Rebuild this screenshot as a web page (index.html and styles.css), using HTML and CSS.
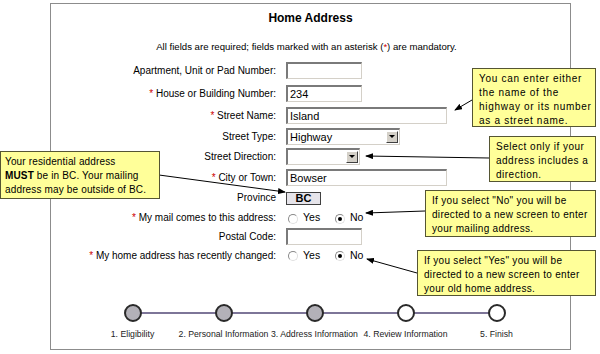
FILE: index.html
```html
<!DOCTYPE html>
<html>
<head>
<meta charset="utf-8">
<link rel="stylesheet" href="styles.css">
</head>
<body>
<div class="page">
  <div class="panel">
    <h1 class="title">Home Address</h1>
    <p class="intro">All fields are required; fields marked with an asterisk (<span class="req">*</span>) are mandatory.</p>
    <div class="form">
      <div class="lbl">Apartment, Unit or Pad Number:</div>
      <div class="ctl"><span class="input w76"></span></div>

      <div class="lbl"><span class="req">*</span> House or Building Number:</div>
      <div class="ctl"><span class="input w76">234</span></div>

      <div class="lbl"><span class="req">*</span> Street Name:</div>
      <div class="ctl"><span class="input w161">Island</span></div>

      <div class="lbl">Street Type:</div>
      <div class="ctl"><span class="select w114"><span class="sel-text">Highway</span><span class="sel-btn"></span></span></div>

      <div class="lbl">Street Direction:</div>
      <div class="ctl"><span class="select w74"><span class="sel-text"></span><span class="sel-btn"></span></span></div>

      <div class="lbl"><span class="req">*</span> City or Town:</div>
      <div class="ctl"><span class="input w161">Bowser</span></div>

      <div class="lbl">Province</div>
      <div class="ctl"><span class="prov">BC</span></div>

      <div class="lbl"><span class="req">*</span> My mail comes to this address:</div>
      <div class="ctl radios"><span class="radio"></span><span class="rlabel">Yes</span><span class="radio on"></span><span class="rlabel">No</span></div>

      <div class="lbl">Postal Code:</div>
      <div class="ctl"><span class="input w76"></span></div>

      <div class="lbl"><span class="req">*</span> My home address has recently changed:</div>
      <div class="ctl radios"><span class="radio"></span><span class="rlabel">Yes</span><span class="radio on"></span><span class="rlabel">No</span></div>
    </div>

    <div class="steps">
      <div class="track"></div>
      <div class="step done"><span class="dot"></span><span class="slabel">1. Eligibility</span></div>
      <div class="step done"><span class="dot"></span><span class="slabel">2. Personal Information</span></div>
      <div class="step done"><span class="dot"></span><span class="slabel">3. Address Information</span></div>
      <div class="step"><span class="dot"></span><span class="slabel">4. Review Information</span></div>
      <div class="step"><span class="dot"></span><span class="slabel">5. Finish</span></div>
    </div>
  </div>

  <svg class="arrows" width="600" height="354" viewBox="0 0 600 354">
    <defs>
      <marker id="ah" markerWidth="8" markerHeight="6" refX="7" refY="3" orient="auto" markerUnits="userSpaceOnUse">
        <path d="M0,0 L8,3 L0,6 Z" fill="#000"/>
      </marker>
    </defs>
    <line x1="472" y1="100" x2="455" y2="110" stroke="#000" stroke-width="1" marker-end="url(#ah)"/>
    <line x1="489" y1="158" x2="366" y2="156" stroke="#000" stroke-width="1" marker-end="url(#ah)"/>
    <line x1="159" y1="175" x2="285" y2="192" stroke="#000" stroke-width="1" marker-end="url(#ah)"/>
    <line x1="425" y1="211" x2="366" y2="213" stroke="#000" stroke-width="1" marker-end="url(#ah)"/>
    <line x1="417" y1="273" x2="367" y2="259" stroke="#000" stroke-width="1" marker-end="url(#ah)"/>
  </svg>

  <div class="note n1">You can enter either<br>the name of the<br>highway or its number<br>as a street name.</div>
  <div class="note n2">Select only if your<br>address includes a<br>direction.</div>
  <div class="note n3">Your residential address<br><b>MUST</b> be in BC. Your mailing<br>address may be outside of BC.</div>
  <div class="note n4">If you select "No" you will be<br>directed to a new screen to enter<br>your mailing address.</div>
  <div class="note n5">If you select "Yes" you will be<br>directed to a new screen to enter<br>your old home address.</div>
</div>
</body>
</html>
```

FILE: styles.css
```css
* { box-sizing: border-box; }
html, body { margin: 0; padding: 0; background: #fff; }
body {
  font-family: "Liberation Sans", Arial, sans-serif;
  font-size: 10px;
  color: #000;
}
.page {
  position: relative;
  width: 600px;
  height: 354px;
  padding: 3px 0 0 50px;
}
.panel {
  width: 521px;
  height: 347px;
  border: 1px solid #8c8c8c;
  display: flex;
  flex-direction: column;
}
.title {
  margin: 7px 0 0;
  font-size: 12px;
  font-weight: bold;
  text-align: center;
  line-height: 14px;
}
.intro {
  margin: 15px 0 0;
  padding-right: 8px;
  text-align: center;
  line-height: 13px;
  font-size: 9.6px;
}
.req { color: #cc0000; }
.form {
  margin-top: 5px;
  display: grid;
  grid-template-columns: 225px 235px;
  grid-template-rows: 24px 23px 21px 20px 21px 20px 21px 19px 19px 18px;
  column-gap: 10px;
  align-items: center;
}
.lbl { text-align: right; white-space: nowrap; line-height: 13px; }
.ctl { display: flex; align-items: center; }
.input {
  display: block;
  height: 17px;
  border-top: 2px solid #7a7a7a;
  border-left: 2px solid #7a7a7a;
  border-right: 1px solid #d4d0c8;
  border-bottom: 1px solid #d4d0c8;
  background: #fff;
  padding: 0 2px;
  line-height: 14px;
  font-size: 11px;
}
.w76 { width: 76px; }
.w161 { width: 161px; }
.w114 { width: 114px; }
.w74 { width: 74px; }
.select {
  display: flex;
  height: 17px;
  border-top: 2px solid #7a7a7a;
  border-left: 2px solid #7a7a7a;
  border-right: 1px solid #d4d0c8;
  border-bottom: 1px solid #d4d0c8;
  background: #fff;
  font-size: 11px;
}
.sel-text { flex: 1; padding: 0 2px; line-height: 14px; }
.sel-btn {
  width: 12px;
  height: 12px;
  margin: 1px 1px 0 0;
  background: #d4d0c8;
  border-top: 1px solid #fff;
  border-left: 1px solid #fff;
  border-right: 1px solid #404040;
  border-bottom: 1px solid #404040;
  position: relative;
}
.sel-btn::after {
  content: "";
  position: absolute;
  left: 2px;
  top: 3px;
  border-left: 3px solid transparent;
  border-right: 3px solid transparent;
  border-top: 3px solid #000;
}
.prov {
  display: block;
  width: 35px;
  height: 13px;
  border: 1px solid #404040;
  background: #e6e4ea;
  font-weight: bold;
  font-size: 11px;
  text-align: center;
  line-height: 11px;
  margin-top: 1px;
}
.radios { padding-left: 2px; }
.radio {
  width: 10px;
  height: 10px;
  border-radius: 50%;
  border: 1px solid #8a8a8a;
  border-right-color: #e0e0e0;
  border-bottom-color: #e0e0e0;
  background: #fff;
  position: relative;
  margin-top: 2px;
}
.radio.on::after {
  content: "";
  position: absolute;
  left: 2px;
  top: 2px;
  width: 4px;
  height: 4px;
  border-radius: 50%;
  background: #000;
}
.rlabel { margin-left: 5px; width: 32px; line-height: 13px; font-size: 10.5px; }
.steps {
  position: relative;
  margin-top: 40px;
  padding-left: 36px;
  display: flex;
}
.track {
  position: absolute;
  left: 81px;
  top: 8px;
  width: 363px;
  height: 2px;
  background: #7d7598;
}
.step {
  position: relative;
  width: 91px;
  display: flex;
  flex-direction: column;
  align-items: center;
}
.dot {
  width: 18px;
  height: 18px;
  border-radius: 50%;
  border: 2px solid #2a2a2a;
  background: #fff;
}
.step.done .dot { background: #b3b1b8; }
.slabel {
  margin-top: 7px;
  font-size: 8.7px;
  white-space: nowrap;
  color: #222;
  line-height: 11px;
}
.arrows { position: absolute; left: 0; top: 0; pointer-events: none; }
.note {
  position: absolute;
  background: #ffff99;
  border: 1px solid #555533;
  padding: 3px 0 0 6px;
  line-height: 14px;
  letter-spacing: 0.3px;
  font-size: 10px;
  white-space: nowrap;
}
.n1 { left: 472px; top: 68px; width: 124px; height: 59px; letter-spacing: 0.7px; }
.n2 { left: 489px; top: 136px; width: 107px; height: 46px; letter-spacing: 0.5px; }
.n3 { left: 0; top: 151px; width: 160px; height: 48px; padding-left: 4px; letter-spacing: 0.15px; }
.n4 { left: 425px; top: 190px; width: 171px; height: 47px; }
.n5 { left: 417px; top: 250px; width: 179px; height: 46px; }
```
